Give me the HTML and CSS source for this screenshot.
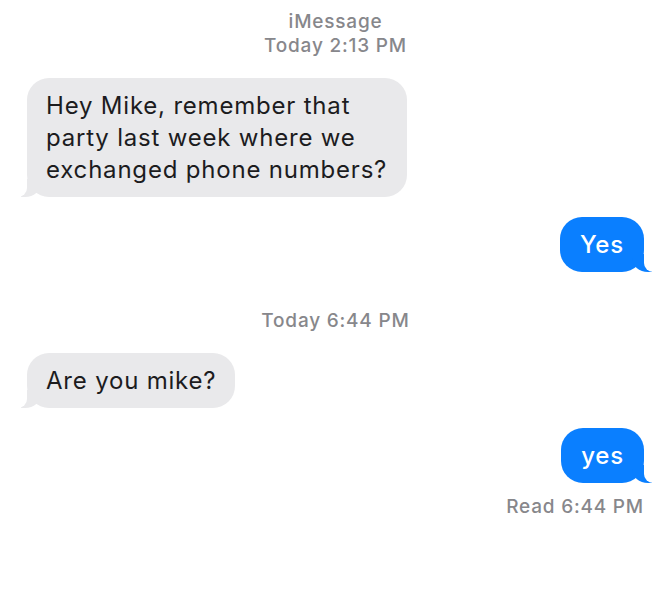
FILE: index.html
```html
<!DOCTYPE html>
<html lang="en">
<head>
    <meta charset="UTF-8">
    <meta name="viewport" content="width=device-width, initial-scale=1.0">
    <title>iMessage</title>
    <link rel="stylesheet" href="styles.css">
</head>
<body>

    <div class="chat">
        <div class="stamp">
            <div>iMessage</div>
            <div>Today 2:13 PM</div>
        </div>

        <div class="msg them">Hey Mike, remember that party last week where we exchanged phone numbers?</div>
        <div class="msg me">Yes</div>

        <div class="stamp later">Today 6:44 PM</div>

        <div class="msg them">Are you mike?</div>
        <div class="msg me">yes</div>

        <div class="status">Read 6:44 PM</div>
    </div>

</body>
</html>
```

FILE: styles.css
```css
body {
    margin: 0;
    background: #fff;
    font-family: Inter, "Noto Sans", sans-serif;
}
.chat {
    display: flex;
    flex-direction: column;
    padding: 10px 16px 20px 27px;
}
.stamp {
    align-self: center;
    text-align: center;
    font-size: 19px;
    line-height: 24px;
    letter-spacing: 0.8px;
    font-weight: 500;
    color: #87878b;
}
.stamp.later {
    margin-top: 37px;
}
.msg {
    position: relative;
    font-size: 24px;
    line-height: 32px;
    letter-spacing: 0.8px;
    padding: 12px 19px 11px;
    border-radius: 22px;
    margin-top: 20px;
    max-width: 342px;
}
.them {
    align-self: flex-start;
    background: #e9e9eb;
    color: #1c1c1e;
}
.me {
    align-self: flex-end;
    background: #0a7fff;
    color: #fff;
    font-weight: 500;
    padding-left: 20px;
    padding-right: 20px;
}
.msg::before,
.msg::after {
    content: "";
    position: absolute;
    bottom: 0;
    height: 18px;
}
.them::before {
    left: -6px;
    border-left: 20px solid #e9e9eb;
    border-bottom-right-radius: 16px 14px;
}
.them::after {
    left: -12px;
    width: 12px;
    background: #fff;
    border-bottom-right-radius: 9px;
}
.me::before {
    right: -8px;
    border-right: 20px solid #0a7fff;
    border-bottom-left-radius: 16px 14px;
}
.me::after {
    right: -14px;
    width: 14px;
    background: #fff;
    border-bottom-left-radius: 9px;
}
.status {
    align-self: flex-end;
    margin-top: 12px;
    font-size: 19px;
    line-height: 24px;
    letter-spacing: 0.8px;
    font-weight: 500;
    color: #87878b;
}
```
